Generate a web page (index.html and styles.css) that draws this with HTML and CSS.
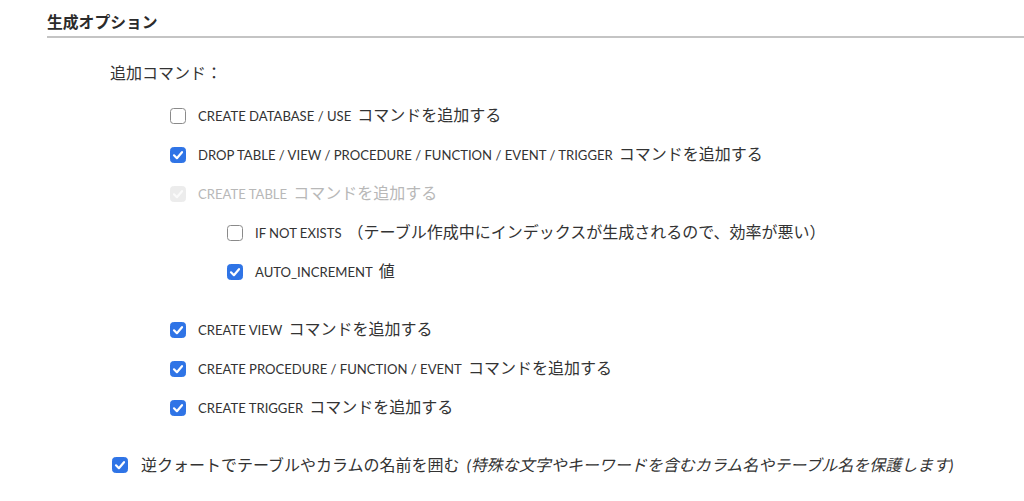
FILE: index.html
```html
<!DOCTYPE html>
<html lang="ja">
<head>
<meta charset="utf-8">
<title>生成オプション</title>
<link rel="stylesheet" href="styles.css">
</head>
<body>
<div class="page">
  <h2 class="title">生成オプション</h2>
  <div class="subhead">追加コマンド：</div>
  <div class="list">
    <label class="row l1"><span class="box"></span><span class="txt"><span class="en">CREATE DATABASE / USE</span> コマンドを追加する</span></label>
    <label class="row l1"><span class="box on"><svg viewBox="0 0 16 16"><path d="M4 8.3 L6.9 11.2 L12 5.2"/></svg></span><span class="txt"><span class="en">DROP TABLE / VIEW / PROCEDURE / FUNCTION / EVENT / TRIGGER</span> コマンドを追加する</span></label>
    <label class="row l1 disabled"><span class="box dis"><svg viewBox="0 0 16 16"><path d="M4 8.3 L6.9 11.2 L12 5.2"/></svg></span><span class="txt"><span class="en">CREATE TABLE</span> コマンドを追加する</span></label>
    <label class="row l2"><span class="box"></span><span class="txt"><span class="en">IF NOT EXISTS</span> （テーブル作成中にインデックスが生成されるので、効率が悪い）</span></label>
    <label class="row l2"><span class="box on"><svg viewBox="0 0 16 16"><path d="M4 8.3 L6.9 11.2 L12 5.2"/></svg></span><span class="txt"><span class="en">AUTO_INCREMENT</span> 値</span></label>
    <div class="spacer"></div>
    <label class="row l1"><span class="box on"><svg viewBox="0 0 16 16"><path d="M4 8.3 L6.9 11.2 L12 5.2"/></svg></span><span class="txt"><span class="en">CREATE VIEW</span> コマンドを追加する</span></label>
    <label class="row l1"><span class="box on"><svg viewBox="0 0 16 16"><path d="M4 8.3 L6.9 11.2 L12 5.2"/></svg></span><span class="txt"><span class="en">CREATE PROCEDURE / FUNCTION / EVENT</span> コマンドを追加する</span></label>
    <label class="row l1"><span class="box on"><svg viewBox="0 0 16 16"><path d="M4 8.3 L6.9 11.2 L12 5.2"/></svg></span><span class="txt"><span class="en">CREATE TRIGGER</span> コマンドを追加する</span></label>
    <div class="spacer last"></div>
    <label class="row l0"><span class="box on"><svg viewBox="0 0 16 16"><path d="M4 8.3 L6.9 11.2 L12 5.2"/></svg></span><span class="txt">逆クォートでテーブルやカラムの名前を囲む <i class="note">(特殊な文字やキーワードを含むカラム名やテーブル名を保護します)</i></span></label>
  </div>
</div>
</body>
</html>
```
FILE: styles.css
```css
html, body {
  margin: 0;
  padding: 0;
  background: #ffffff;
}
body {
  font-family: Lato, "Noto Sans CJK JP", sans-serif;
  color: #333333;
  font-size: 16px;
}
.page {
  padding-top: 11px;
}
.title {
  margin: 0 0 0 47px;
  font-size: 15.8px;
  font-weight: 700;
  line-height: 22px;
  padding-bottom: 3px;
  border-bottom: 2px solid #c4c4c4;
  color: #2b2b2b;
}
.subhead {
  margin-top: 24px;
  padding-left: 110px;
  line-height: 22px;
}
.list {
  margin-top: 12px;
  display: flex;
  flex-direction: column;
}
.row {
  display: flex;
  align-items: center;
  height: 39px;
  gap: 12px;
}
.l1 { padding-left: 170px; }
.l2 { padding-left: 227px; }
.l0 { padding-left: 112px; gap: 13px; }
.spacer { height: 19px; }
.spacer.last { height: 18px; }
.box {
  flex: none;
  box-sizing: border-box;
  width: 16px;
  height: 16px;
  border: 1px solid #8a8a8a;
  border-radius: 3.5px;
  background: #fff;
  display: flex;
}
.box svg {
  width: 16px;
  height: 16px;
  margin: -1px;
}
.box path {
  fill: none;
  stroke: #fff;
  stroke-width: 2.2;
  stroke-linecap: round;
  stroke-linejoin: round;
}
.box.on {
  background: #2f74e6;
  border-color: #2f74e6;
}
.box.dis {
  background: #ececec;
  border-color: #ececec;
}
.box.dis path { stroke: #fafafa; }
.txt {
  line-height: 22px;
  white-space: nowrap;
}
.en {
  font-size: 13.1px;
  margin-right: 2px;
}
.disabled .txt { color: #b8b8b8; }
.note {
  font-style: italic;
  margin-left: 3px;
}
```
